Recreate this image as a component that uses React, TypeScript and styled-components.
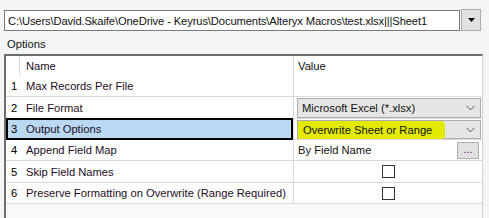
import React from "react";
import styled, { createGlobalStyle } from "styled-components";

const Global = createGlobalStyle`
  html, body { margin: 0; padding: 0; background: #f4f5f7; }
  body { font-family: "Liberation Sans", Arial, sans-serif; font-size: 11.2px; color: #111; }
  * { box-sizing: border-box; }
`;

const Page = styled.div`
  width: 489px;
  height: 218px;
  overflow: hidden;
  display: flex;
  flex-direction: column;
  padding-left: 4px;
`;

const Caption = styled.div`
  height: 14px;
  line-height: 14px;
  margin-top: -12px;
  padding-left: 3px;
`;

const PathRow = styled.div`
  display: flex;
  align-items: flex-start;
  gap: 1px;
  margin-top: 7px;
`;

const PathBox = styled.div`
  width: 456px;
  height: 21px;
  margin-top: 1px;
  background: #fff;
  border: 1px solid #7a7a7a;
  padding-left: 3px;
  display: flex;
  align-items: center;
  white-space: nowrap;
  overflow: hidden;
  letter-spacing: -0.12px;
`;

const DropButton = styled.div`
  width: 20px;
  height: 22px;
  background: #e1e1e1;
  border: 1px solid #adadad;
  display: flex;
  align-items: center;
  justify-content: center;
`;

const SectionLabel = styled.div`
  height: 14px;
  line-height: 14px;
  margin-top: 6px;
  padding-left: 3px;
`;

const Grid = styled.div`
  margin-top: 3px;
  width: 479px;
  flex: 1;
  border-top: 2px solid #6e6e6e;
  border-left: 2px solid #6e6e6e;
  border-right: 1px solid #d2d2d2;
  background: #f8f9fb;
  display: flex;
  flex-direction: column;
`;

const Row = styled.div<{ $h: number; $line?: boolean }>`
  display: flex;
  flex-shrink: 0;
  height: ${(p) => p.$h}px;
  background: #fff;
  border-bottom: ${(p) => (p.$line ? "1px solid #d9d9d9" : "none")};
`;

const RowHead = styled.div<{ $selected?: boolean }>`
  width: 287px;
  display: flex;
  align-items: stretch;
  background: ${(p) => (p.$selected ? "#bad8f2" : "#fff")};
  ${(p) =>
    p.$selected
      ? "box-shadow: inset 0 0 0 2px #000; margin-top: -1px; margin-bottom: -1px; position: relative; z-index: 1;"
      : ""}
`;

const NumCell = styled.div<{ $corner?: boolean }>`
  width: 14px;
  display: flex;
  align-items: center;
  justify-content: center;
  padding-left: 2px;
  color: #000;
  border-right: ${(p) => (p.$corner ? "1px solid #dadada" : "none")};
`;

const NameCell = styled.div`
  flex: 1;
  display: flex;
  align-items: center;
  padding-left: 6px;
  color: #1e0d24;
  white-space: nowrap;
`;

const ValueCell = styled.div<{ $center?: boolean }>`
  flex: 1;
  display: flex;
  align-items: center;
  justify-content: ${(p) => (p.$center ? "center" : "flex-start")};
  border-left: 1px solid #d9d9d9;
  padding-left: ${(p) => (p.$center ? "0" : "4px")};
  white-space: nowrap;
`;

const Combo = styled.div`
  flex: 1;
  align-self: stretch;
  margin: 1px 1px 0 -1px;
  background: #e5e5e5;
  border: 1px solid #adadad;
  display: flex;
  align-items: center;
  justify-content: space-between;
  padding: 0 5px 0 4px;
`;

const Highlight = styled.span`
  background: #e2ea00;
  margin-left: -4px;
  padding: 3px 13px 3px 5px;
  border-radius: 2px 4px 3px 2px;
`;

const DotsButton = styled.div`
  margin-left: auto;
  margin-right: 3px;
  width: 22px;
  height: 17px;
  background: #e1e1e1;
  border: 1px solid #adadad;
  display: flex;
  align-items: center;
  justify-content: center;
  color: #6a1b6a;
  font-size: 11px;
  padding-bottom: 2px;
`;

const CheckBox = styled.div`
  width: 13px;
  height: 13px;
  border: 1px solid #333;
  background: #fff;
`;

const Chevron = () => (
  <svg width="9" height="6" viewBox="0 0 9 6">
    <path d="M0.5 0.8 L4.5 4.8 L8.5 0.8" fill="none" stroke="#555" strokeWidth="1" />
  </svg>
);

const Tri = () => (
  <svg width="7" height="4" viewBox="0 0 7 4">
    <path d="M0 0 H7 L3.5 4 Z" fill="#000" />
  </svg>
);

export default function App() {
  return (
    <>
      <Global />
      <Page>
        <Caption>Write to File or Database</Caption>
        <PathRow>
          <PathBox>C:\Users\David.Skaife\OneDrive - Keyrus\Documents\Alteryx Macros\test.xlsx|||Sheet1</PathBox>
          <DropButton>
            <Tri />
          </DropButton>
        </PathRow>
        <SectionLabel>Options</SectionLabel>
        <Grid>
          <Row $h={19}>
            <RowHead>
              <NumCell $corner />
              <NameCell>Name</NameCell>
            </RowHead>
            <ValueCell>Value</ValueCell>
          </Row>
          <Row $h={22} $line>
            <RowHead>
              <NumCell>1</NumCell>
              <NameCell>Max Records Per File</NameCell>
            </RowHead>
            <ValueCell />
          </Row>
          <Row $h={22} $line>
            <RowHead>
              <NumCell>2</NumCell>
              <NameCell>File Format</NameCell>
            </RowHead>
            <ValueCell>
              <Combo>
                <span>Microsoft Excel (*.xlsx)</span>
                <Chevron />
              </Combo>
            </ValueCell>
          </Row>
          <Row $h={21} $line>
            <RowHead $selected>
              <NumCell>3</NumCell>
              <NameCell>Output Options</NameCell>
            </RowHead>
            <ValueCell>
              <Combo>
                <Highlight>Overwrite Sheet or Range</Highlight>
                <Chevron />
              </Combo>
            </ValueCell>
          </Row>
          <Row $h={21} $line>
            <RowHead>
              <NumCell>4</NumCell>
              <NameCell>Append Field Map</NameCell>
            </RowHead>
            <ValueCell>
              By Field Name
              <DotsButton>...</DotsButton>
            </ValueCell>
          </Row>
          <Row $h={22} $line>
            <RowHead>
              <NumCell>5</NumCell>
              <NameCell>Skip Field Names</NameCell>
            </RowHead>
            <ValueCell $center>
              <CheckBox />
            </ValueCell>
          </Row>
          <Row $h={21} $line>
            <RowHead>
              <NumCell>6</NumCell>
              <NameCell>Preserve Formatting on Overwrite (Range Required)</NameCell>
            </RowHead>
            <ValueCell $center>
              <CheckBox />
            </ValueCell>
          </Row>
        </Grid>
      </Page>
    </>
  );
}
